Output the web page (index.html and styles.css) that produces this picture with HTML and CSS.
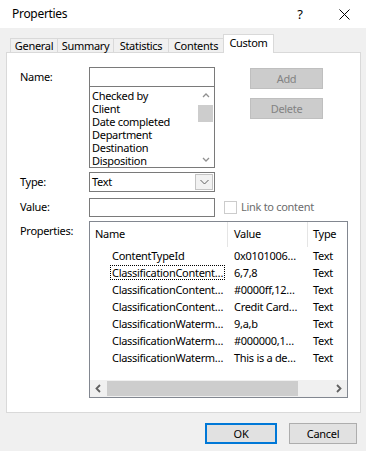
FILE: index.html
```
<!DOCTYPE html>
<html>
<head>
<meta charset="utf-8">
<link rel="stylesheet" href="styles.css">
</head>
<body>
<div class="dialog">
  <div class="titlebar">
    <span class="title">Properties</span>
    <span class="cap help">?</span>
    <span class="cap close"><svg width="11" height="11" viewBox="0 0 11 11"><path d="M0.5 0.5 L10.5 10.5 M10.5 0.5 L0.5 10.5" stroke="#000" stroke-width="1" fill="none"/></svg></span>
  </div>
  <div class="client">
    <div class="tabs">
      <div class="tab t-general">General</div>
      <div class="tab t-summary">Summary</div>
      <div class="tab t-stats">Statistics</div>
      <div class="tab t-contents">Contents</div>
      <div class="tab t-custom sel">Custom</div>
    </div>
    <div class="panel">
      <div class="row row-name">
        <div class="label">Name:</div>
        <div class="namebox">
          <div class="input"></div>
          <div class="listbox">
            <div class="items">
              <div>Checked by</div>
              <div>Client</div>
              <div>Date completed</div>
              <div>Department</div>
              <div>Destination</div>
              <div>Disposition</div>
            </div>
            <div class="vscroll">
              <svg class="arr" width="16" height="14" viewBox="0 0 16 14"><path d="M5 8 L8 5 L11 8" stroke="#909090" stroke-width="1.3" fill="none"/></svg>
              <div class="vthumb"></div>
              <div class="vfill"></div>
              <svg class="arr" width="16" height="14" viewBox="0 0 16 14"><path d="M5 6 L8 9 L11 6" stroke="#909090" stroke-width="1.3" fill="none"/></svg>
            </div>
          </div>
        </div>
        <div class="btncol">
          <div class="btn dis">Add</div>
          <div class="btn dis">Delete</div>
        </div>
      </div>
      <div class="row row-type">
        <div class="label">Type:</div>
        <div class="combo">
          <span class="combo-text">Text</span>
          <span class="combo-btn"><svg width="9" height="6" viewBox="0 0 9 6"><path d="M0.5 1 L4.5 5 L8.5 1" stroke="#606060" stroke-width="1" fill="none"/></svg></span>
        </div>
      </div>
      <div class="row row-value">
        <div class="label">Value:</div>
        <div class="input value-input"></div>
        <span class="check"></span>
        <span class="check-label">Link to content</span>
      </div>
      <div class="row row-props">
        <div class="label">Properties:</div>
        <div class="listview">
          <div class="lv-head">
            <div class="c-name h">Name</div>
            <div class="c-value h">Value</div>
            <div class="c-type h">Type</div>
          </div>
          <div class="lv-row">
            <div class="c-name"><span class="nm">ContentTypeId</span></div>
            <div class="c-value">0x0101006…</div>
            <div class="c-type">Text</div>
          </div>
          <div class="lv-row">
            <div class="c-name"><span class="nm focus">ClassificationContent…</span></div>
            <div class="c-value">6,7,8</div>
            <div class="c-type">Text</div>
          </div>
          <div class="lv-row">
            <div class="c-name"><span class="nm">ClassificationContent…</span></div>
            <div class="c-value">#0000ff,12…</div>
            <div class="c-type">Text</div>
          </div>
          <div class="lv-row">
            <div class="c-name"><span class="nm">ClassificationContent…</span></div>
            <div class="c-value">Credit Card…</div>
            <div class="c-type">Text</div>
          </div>
          <div class="lv-row">
            <div class="c-name"><span class="nm">ClassificationWaterm…</span></div>
            <div class="c-value">9,a,b</div>
            <div class="c-type">Text</div>
          </div>
          <div class="lv-row">
            <div class="c-name"><span class="nm">ClassificationWaterm…</span></div>
            <div class="c-value">#000000,1…</div>
            <div class="c-type">Text</div>
          </div>
          <div class="lv-row">
            <div class="c-name"><span class="nm">ClassificationWaterm…</span></div>
            <div class="c-value">This is a de…</div>
            <div class="c-type">Text</div>
          </div>
          <div class="hscroll">
            <span class="harr"><svg width="17" height="17" viewBox="0 0 17 17"><path d="M10 5 L6.5 8.5 L10 12" stroke="#606060" stroke-width="1.8" fill="none"/></svg></span>
            <span class="hthumb"></span>
            <span class="hfill"></span>
            <span class="harr"><svg width="17" height="17" viewBox="0 0 17 17"><path d="M7 5 L10.5 8.5 L7 12" stroke="#606060" stroke-width="1.8" fill="none"/></svg></span>
          </div>
        </div>
      </div>
    </div>
    <div class="footer">
      <div class="pbtn ok">OK</div>
      <div class="pbtn cancel">Cancel</div>
    </div>
  </div>
</div>
</body>
</html>
```
FILE: styles.css
```
* { box-sizing: border-box; }
html, body { margin: 0; padding: 0; }
body {
  width: 366px;
  height: 451px;
  overflow: hidden;
  background: #f0f0f0;
  font-family: "Noto Sans", "Liberation Sans", sans-serif;
  font-size: 11px;
  letter-spacing: -0.3px;
  color: #000;
}
.dialog { width: 366px; height: 451px; }

.titlebar {
  height: 28px;
  background: #fff;
  display: flex;
  align-items: center;
  padding-left: 12px;
}
.title { flex: 1; font-size: 12px; line-height: 16px; }
.cap { display: flex; align-items: center; justify-content: center; height: 28px; }
.help { width: 46px; font-size: 13px; }
.close { width: 43px; }

.client { padding: 0 5px 0 6px; }

.tabs {
  height: 24px;
  display: flex;
  align-items: flex-end;
  padding-left: 4px;
}
.tab {
  height: 14px;
  line-height: 13px;
  text-align: center;
  border: 1px solid #d9d9d9;
  border-bottom: none;
  border-right: none;
  background: #f0f0f0;
  white-space: nowrap;
  flex: none;
}
.t-general { width: 47px; }
.t-summary { width: 56px; }
.t-stats { width: 55px; }
.t-contents { width: 55px; }
.t-custom { width: 51px; }
.tab.sel {
  height: 19px;
  line-height: 16px;
  padding-bottom: 2px;
  border-right: 1px solid #d9d9d9;
  background: #fff;
  margin-bottom: -1px;
  position: relative;
  z-index: 1;
}

.panel {
  height: 361px;
  border: 1px solid #d9d9d9;
  background: #fff;
  padding: 14px 0 0 13px;
}
.row { display: flex; align-items: flex-start; }
.label { width: 69px; line-height: 20px; flex: none; }

.input {
  width: 126px;
  height: 20px;
  border: 1px solid #7a7a7a;
  background: #fff;
}
.listbox {
  width: 126px;
  height: 81px;
  border: 1px solid #7a7a7a;
  border-top: none;
  display: flex;
}
.items { flex: 1; padding: 2px 0 0 2px; line-height: 13px; white-space: nowrap; overflow: hidden; }
.vscroll {
  width: 17px;
  display: flex;
  flex-direction: column;
  align-items: center;
  padding: 2px 0 1px;
}
.arr { display: block; flex: none; }
.vthumb { width: 15px; height: 17px; background: #cdcdcd; margin-top: 2px; flex: none; }
.vfill { flex: 1; }

.btncol { margin-left: 35px; padding-top: 1px; display: flex; flex-direction: column; gap: 9px; }
.btn {
  width: 73px;
  height: 21px;
  line-height: 19px;
  text-align: center;
  border: 1px solid #bfbfbf;
  background: #cccccc;
}
.btn.dis { color: #838383; }

.row-type { margin-top: 4px; }
.combo {
  width: 126px;
  height: 20px;
  border: 1px solid #7a7a7a;
  background: #fff;
  display: flex;
  align-items: center;
  padding: 1px 1px 1px 2px;
}
.combo-text { flex: 1; line-height: 16px; }
.combo-btn {
  width: 18px;
  height: 16px;
  border: 1px solid #c4c4c4;
  background: #f2f2f2;
  display: flex;
  align-items: center;
  justify-content: center;
}

.row-value { margin-top: 5px; align-items: center; }
.value-input { height: 19px; }
.check {
  width: 13px;
  height: 13px;
  border: 1px solid #cccccc;
  background: #fff;
  margin-left: 9px;
  flex: none;
}
.check-label { margin-left: 4px; color: #6d6d6d; line-height: 16px; }

.row-props { margin-top: 4px; }
.listview {
  width: 259px;
  height: 177px;
  border: 1px solid #828790;
  background: #fff;
  overflow: hidden;
  display: flex;
  flex-direction: column;
}
.lv-head, .lv-row { display: flex; white-space: nowrap; flex: none; }
.lv-head { height: 25px; line-height: 24px; }
.lv-row { height: 17px; line-height: 17px; }
.c-name { width: 138px; flex: none; padding-left: 22px; overflow: hidden; }
.c-value { width: 80px; flex: none; padding-left: 6px; overflow: hidden; }
.c-type { flex: none; width: 60px; padding-left: 5px; }
.h { border-right: 1px solid #e5e5e5; }
.c-name.h { padding-left: 5px; }
.nm { display: inline-block; line-height: 13px; padding: 0 1px; margin-left: -1px; }
.nm.focus { outline: 1px dotted #000; outline-offset: 0; }

.hscroll {
  margin-top: auto;
  height: 17px;
  display: flex;
  background: #f0f0f0;
  flex: none;
  padding: 0 0 1px;
}
.harr { width: 17px; height: 17px; flex: none; display: block; }
.harr svg { display: block; }
.hthumb { width: 191px; height: 15px; margin-top: 1px; background: #cdcdcd; flex: none; }
.hfill { flex: 1; }

.footer {
  display: flex;
  justify-content: flex-end;
  gap: 12px;
  padding: 10px 4px 0 0;
}
.pbtn {
  height: 21px;
  background: #e1e1e1;
  text-align: center;
  line-height: 19px;
}
.ok { width: 72px; border: 2px solid #0078d7; line-height: 17px; }
.cancel { width: 68px; border: 1px solid #adadad; }
```
